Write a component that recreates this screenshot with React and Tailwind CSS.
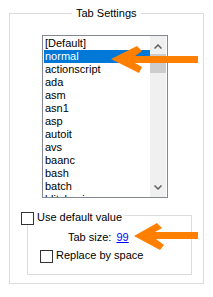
const items = [
  '[Default]',
  'normal',
  'actionscript',
  'ada',
  'asm',
  'asn1',
  'asp',
  'autoit',
  'avs',
  'baanc',
  'bash',
  'batch',
  'blitzbasic',
]

function Checkbox() {
  return <div className="w-[13px] h-[13px] border border-[#333333] bg-white shrink-0" />
}

export default function App() {
  return (
    <div
      className="relative w-[213px] h-[297px] bg-white pt-[13px] pl-[9px] text-[11px] leading-[13px] text-black overflow-hidden"
      style={{ fontFamily: '"Liberation Sans", Arial, sans-serif' }}
    >
      {/* Tab Settings group */}
      <div className="relative w-[195px] h-[271px] border border-[#dcdcdc]">
        <div className="absolute left-[62px] top-[-7px] px-[4px] bg-white whitespace-nowrap">Tab Settings</div>

        {/* language list */}
        <div className="ml-[32px] mt-[21px] w-[126px] h-[163px] border border-[#828790] flex bg-white">
          <div className="w-[107px] h-full pt-[1px] pl-[1px] overflow-hidden">
            {items.map((it, i) => (
              <div
                key={it}
                className={`h-[13px] pl-[1px] whitespace-nowrap ${
                  i === 1 ? 'bg-[#0078d7] text-white' : ''
                }`}
              >
                {it}
              </div>
            ))}
          </div>
          <div className="w-[16px] h-full bg-[#f0f0f0] flex flex-col">
            <div className="h-[17px] pt-[8px] pl-[4px]">
              <svg width="8" height="5" viewBox="0 0 8 5">
                <polyline points="0.5,4.5 4,1 7.5,4.5" fill="none" stroke="#606060" strokeWidth="1.5" />
              </svg>
            </div>
            <div className="mt-[1px] h-[19px] bg-[#cdcdcd]" />
            <div className="flex-1" />
            <div className="h-[17px] pt-[5px] pl-[4px]">
              <svg width="8" height="5" viewBox="0 0 8 5">
                <polyline points="0.5,0.5 4,4 7.5,0.5" fill="none" stroke="#606060" strokeWidth="1.5" />
              </svg>
            </div>
          </div>
          <div className="w-[1px]" />
        </div>

        {/* default value group */}
        <div className="relative ml-[17px] mt-[17px] w-[165px] h-[60px] border border-[#dcdcdc]">
          <div className="absolute left-[-7px] top-[-5px] flex items-start bg-white pr-[2px]">
            <div className="mt-[1px]">
              <Checkbox />
            </div>
            <span className="ml-[3px] whitespace-nowrap">Use default value</span>
          </div>

          <div className="pt-[15px] pl-[40px] flex whitespace-nowrap">
            <span>Tab size:</span>
            <span className="ml-[5px] text-[#0000ff] underline">99</span>
          </div>

          <div className="mt-[5px] pl-[12px] flex items-start whitespace-nowrap">
            <div className="mt-[1px]">
              <Checkbox />
            </div>
            <span className="ml-[3px]">Replace by space</span>
          </div>
        </div>
      </div>

      {/* orange call-out arrows */}
      <svg className="absolute inset-0 pointer-events-none" width="213" height="297" viewBox="0 0 213 297">
        <polygon
          points="111,59 137,46 142,51 135,56 198,56 198,63 135,63 142,67 139,73"
          fill="#ff8000"
        />
        <polygon
          points="134,236 157,223 162,228 155,232 198,232 198,239 156,239 164,245 160,250"
          fill="#ff8000"
        />
      </svg>
    </div>
  )
}
